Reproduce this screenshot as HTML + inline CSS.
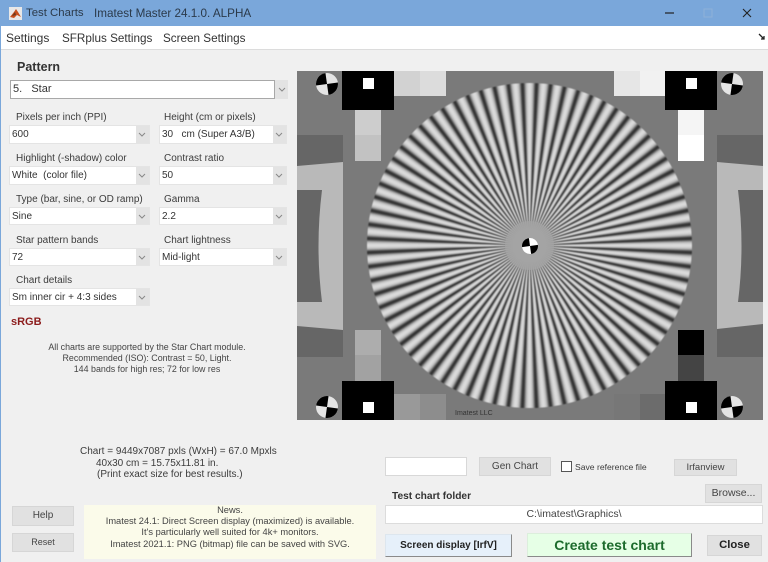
<!DOCTYPE html>
<html><head><meta charset="utf-8"><title>Test Charts</title>
<style>
html,body{margin:0;padding:0;background:#f0f0f0}
body{width:768px;height:562px;overflow:hidden;position:relative;font-family:"Liberation Sans",sans-serif;color:#333}
#p{position:absolute;left:0;top:0;width:768px;height:562px;overflow:hidden;background:#f0f0f0;filter:blur(.35px)}
.a,.t,.d,.b,.c{position:absolute;box-sizing:border-box;white-space:pre}
.t{font-size:10px;line-height:12px;color:#3c3c3c}
.l{margin-top:1px}
.c{font-size:8.9px;line-height:11px;text-align:center;color:#444}
.d{background:#fff;font-size:10px;line-height:18px;padding-left:2px;color:#333;border:1px solid #e4e4e4}
.d i{position:absolute;right:0;top:0;bottom:0;width:13px;background:#e3e3e3}
.d svg{position:absolute;right:3px;top:6px}
.b{background:#e1e1e1;border:1px solid #d6d6d6;text-align:center;font-size:10px;color:#444}
.m{font-size:11.7px;line-height:15px}
</style></head><body><div id="p">

<div class="a" style="left:0;top:0;width:768px;height:26px;background:#7aa7da"></div>
<div class="a" style="left:0;top:26px;width:1px;height:536px;background:#7aa7da"></div>
<svg class="a" style="left:9px;top:7px" width="13" height="13" viewBox="0 0 13 13"><rect width="13" height="13" fill="#e8e8e8"/><path d="M1 10 L5 5 L7 2 L9 5 L12 10 L8 8 L5 11 Z" fill="#c8501e"/><path d="M3 9 L6 5 L7 8Z" fill="#6a3a20"/></svg>
<div class="t m" style="left:26px;top:6px;color:#2b3a4a;font-size:11.4px">Test Charts</div>
<div class="t m" style="left:94px;top:6px;color:#2b3a4a">Imatest Master 24.1.0. ALPHA</div>
<svg class="a" style="left:660px;top:5px" width="108" height="18" viewBox="0 0 108 18">
<path d="M5 8H14" stroke="#222" stroke-width="1.2"/>
<rect x="44" y="4" width="8" height="8" fill="none" stroke="#8fb0d8"/>
<path d="M83 4L91 12M91 4L83 12" stroke="#222" stroke-width="1.1"/></svg>

<div class="a" style="left:1px;top:26px;width:767px;height:24px;background:#fff;border-bottom:1px solid #dcdcdc"></div>
<div class="t m" style="left:6px;top:31px;color:#333;font-size:12px">Settings</div>
<div class="t m" style="left:62px;top:31px;color:#333">SFRplus Settings</div>
<div class="t m" style="left:163px;top:31px;color:#333">Screen Settings</div>
<svg class="a" style="left:758px;top:33px" width="8" height="8" viewBox="0 0 8 8"><path d="M1 1L6 6M6 3V6H3" stroke="#222" stroke-width="1.3" fill="none"/></svg>

<div class="t" style="left:17px;top:60px;font-size:12.5px;line-height:14px;font-weight:bold;color:#333">Pattern</div>
<div class="d" style="left:10px;top:80px;width:265px;height:19px;border:1px solid #a8a8a8;font-size:11px;line-height:17px">5.   Star</div>
<div class="d" style="left:275px;top:80px;width:13px;height:19px;border:0;background:#e3e3e3"><svg style="right:2px;top:7px" width="8" height="5" viewBox="0 0 8 5"><path d="M1 1L4 4L7 1" stroke="#888" fill="none"/></svg></div>

<div class="t l" style="left:16px;top:111px">Pixels per inch (PPI)</div>
<div class="t l" style="left:164px;top:111px">Height (cm or pixels)</div>
<div class="d" style="left:9px;top:125px;width:141px;height:19px">600<i></i><svg width="8" height="5" viewBox="0 0 8 5"><path d="M1 1L4 4L7 1" stroke="#888" fill="none"/></svg></div>
<div class="d" style="left:159px;top:125px;width:128px;height:19px">30   cm (Super A3/B)<i></i><svg width="8" height="5" viewBox="0 0 8 5"><path d="M1 1L4 4L7 1" stroke="#888" fill="none"/></svg></div>

<div class="t l" style="left:16px;top:152px">Highlight (-shadow) color</div>
<div class="t l" style="left:164px;top:152px">Contrast ratio</div>
<div class="d" style="left:9px;top:166px;width:141px;height:19px">White  (color file)<i></i><svg width="8" height="5" viewBox="0 0 8 5"><path d="M1 1L4 4L7 1" stroke="#888" fill="none"/></svg></div>
<div class="d" style="left:159px;top:166px;width:128px;height:19px">50<i></i><svg width="8" height="5" viewBox="0 0 8 5"><path d="M1 1L4 4L7 1" stroke="#888" fill="none"/></svg></div>

<div class="t l" style="left:16px;top:193px">Type (bar, sine, or OD ramp)</div>
<div class="t l" style="left:164px;top:193px">Gamma</div>
<div class="d" style="left:9px;top:207px;width:141px;height:18px">Sine<i></i><svg width="8" height="5" viewBox="0 0 8 5"><path d="M1 1L4 4L7 1" stroke="#888" fill="none"/></svg></div>
<div class="d" style="left:159px;top:207px;width:128px;height:18px">2.2<i></i><svg width="8" height="5" viewBox="0 0 8 5"><path d="M1 1L4 4L7 1" stroke="#888" fill="none"/></svg></div>

<div class="t l" style="left:16px;top:234px">Star pattern bands</div>
<div class="t l" style="left:164px;top:234px">Chart lightness</div>
<div class="d" style="left:9px;top:248px;width:141px;height:18px">72<i></i><svg width="8" height="5" viewBox="0 0 8 5"><path d="M1 1L4 4L7 1" stroke="#888" fill="none"/></svg></div>
<div class="d" style="left:159px;top:248px;width:128px;height:18px">Mid-light<i></i><svg width="8" height="5" viewBox="0 0 8 5"><path d="M1 1L4 4L7 1" stroke="#888" fill="none"/></svg></div>

<div class="t l" style="left:16px;top:274px">Chart details</div>
<div class="d" style="left:9px;top:288px;width:141px;height:18px">Sm inner cir + 4:3 sides<i></i><svg width="8" height="5" viewBox="0 0 8 5"><path d="M1 1L4 4L7 1" stroke="#888" fill="none"/></svg></div>

<div class="t" style="left:11px;top:316px;font-size:11px;font-weight:bold;color:#8c1c1c">sRGB</div>
<div class="c" style="left:0;top:341px;width:294px;margin-top:1px">All charts are supported by the Star Chart module.
Recommended (ISO): Contrast = 50, Light.
144 bands for high res; 72 for low res</div>

<!-- chart -->
<svg class="a" style="left:297px;top:71px" width="466" height="349" viewBox="297 71 466 349">
<rect x="297" y="71" width="466" height="349" fill="#7a7a7a"/>
<rect x="297" y="135" width="46" height="222" fill="#666"/>
<rect x="717" y="135" width="46" height="222" fill="#666"/>
<path d="M297 166L343 162V330L297 326Z" fill="#b9b9b9"/>
<path d="M717 162L763 166V324L717 329Z" fill="#b9b9b9"/>
<path d="M297 190H322Q315 246 322 302H297Z" fill="#666"/>
<path d="M763 190H738Q745 246 738 302H763Z" fill="#666"/>
<rect x="342" y="71" width="52" height="39"/><rect x="665" y="71" width="52" height="39"/>
<rect x="342" y="381" width="52" height="39"/><rect x="665" y="381" width="52" height="39"/>
<g fill="#fff"><rect x="363" y="78" width="11" height="11"/><rect x="686" y="78" width="11" height="11"/><rect x="363" y="402" width="11" height="11"/><rect x="686" y="402" width="11" height="11"/></g>
<rect x="394" y="71" width="26" height="25" fill="#d2d2d2"/><rect x="420" y="71" width="26" height="25" fill="#dcdcdc"/>
<rect x="614" y="71" width="26" height="25" fill="#e6e6e6"/><rect x="640" y="71" width="25" height="25" fill="#f1f1f1"/>
<rect x="355" y="110" width="26" height="25" fill="#cdcdcd"/><rect x="355" y="135" width="26" height="26" fill="#c2c2c2"/>
<rect x="678" y="110" width="26" height="25" fill="#f5f5f5"/><rect x="678" y="135" width="26" height="26" fill="#fff"/>
<rect x="355" y="330" width="26" height="25" fill="#adadad"/><rect x="355" y="355" width="26" height="26" fill="#a2a2a2"/>
<rect x="678" y="330" width="26" height="25" fill="#000"/><rect x="678" y="355" width="26" height="26" fill="#444"/>
<rect x="394" y="394" width="26" height="26" fill="#999"/><rect x="420" y="394" width="26" height="26" fill="#8d8d8d"/>
<rect x="614" y="394" width="26" height="26" fill="#777"/><rect x="640" y="394" width="25" height="26" fill="#6c6c6c"/>
<g>
<circle cx="327" cy="84" r="11" fill="#e4e4e4"/><g transform="rotate(-8 327 84)"><path d="M327 84L316 84A11 11 0 0 1 327 73Z" fill="#000"/><path d="M327 84L338 84A11 11 0 0 1 327 95Z" fill="#000"/></g>
<circle cx="732" cy="84" r="11" fill="#e4e4e4"/><g transform="rotate(8 732 84)"><path d="M732 84L721 84A11 11 0 0 1 732 73Z" fill="#000"/><path d="M732 84L743 84A11 11 0 0 1 732 95Z" fill="#000"/></g>
<circle cx="327" cy="407" r="11" fill="#e4e4e4"/><g transform="rotate(8 327 407)"><path d="M327 407L316 407A11 11 0 0 1 327 396Z" fill="#000"/><path d="M327 407L338 407A11 11 0 0 1 327 418Z" fill="#000"/></g>
<circle cx="732" cy="407" r="11" fill="#e4e4e4"/><g transform="rotate(-8 732 407)"><path d="M732 407L721 407A11 11 0 0 1 732 396Z" fill="#000"/><path d="M732 407L743 407A11 11 0 0 1 732 418Z" fill="#000"/></g>
</g>
<text x="455" y="415" font-family="Liberation Sans" font-size="7" fill="#333">Imatest LLC</text>
</svg>
<div class="a" style="left:367px;top:83px;width:325px;height:325px;border-radius:50%;filter:blur(.4px);background:repeating-conic-gradient(from 0deg,#dcdcdc 0deg,#d6d6d6 .5deg,#b8b8b8 1.15deg,#808080 1.65deg,#404040 2.1deg,#2e2e2e 2.5deg,#404040 2.9deg,#808080 3.35deg,#b8b8b8 3.85deg,#d6d6d6 4.5deg,#dcdcdc 5deg)"></div>
<div class="a" style="left:505px;top:221px;width:49px;height:49px;border-radius:50%;background:radial-gradient(circle,#a4a4a4 0,#a4a4a4 45%,rgba(164,164,164,.7) 70%,rgba(164,164,164,0) 100%)"></div>
<svg class="a" style="left:519px;top:235px" width="22" height="22" viewBox="0 0 22 22"><g transform="rotate(-8 11 11)"><circle cx="11" cy="11" r="8" fill="#fff"/><path d="M11 11L3 11A8 8 0 0 1 11 3Z" fill="#000"/><path d="M11 11L19 11A8 8 0 0 1 11 19Z" fill="#000"/></g></svg>

<!-- bottom-left -->
<div class="t" style="left:80px;top:446px">Chart = 9449x7087 pxls (WxH) = 67.0 Mpxls</div>
<div class="t" style="left:96px;top:458px">40x30 cm = 15.75x11.81 in.</div>
<div class="t" style="left:97px;top:469px">(Print exact size for best results.)</div>

<div class="b" style="left:12px;top:506px;width:62px;height:20px;line-height:18px">Help</div>
<div class="b" style="left:12px;top:533px;width:62px;height:19px;line-height:17px;font-size:9px">Reset</div>
<div class="a" style="left:84px;top:505px;width:292px;height:54px;background:#fbfbea"></div>
<div class="c" style="left:84px;top:505px;width:292px;font-size:9.3px;line-height:11.2px;padding-top:0">News.
Imatest 24.1: Direct Screen display (maximized) is available.
It's particularly well suited for 4k+ monitors.
Imatest 2021.1: PNG (bitmap) file can be saved with SVG.</div>

<!-- bottom-right -->
<div class="a" style="left:385px;top:457px;width:82px;height:19px;background:#fff;border:1px solid #d8d8d8"></div>
<div class="b" style="left:479px;top:457px;width:72px;height:19px;line-height:17px">Gen Chart</div>
<div class="a" style="left:561px;top:461px;width:11px;height:11px;background:#fff;border:1px solid #555"></div>
<div class="t" style="left:575px;top:461px;font-size:8.6px">Save reference file</div>
<div class="b" style="left:674px;top:459px;width:63px;height:17px;line-height:16px;font-size:9.5px">Irfanview</div>
<div class="b" style="left:705px;top:484px;width:57px;height:19px;line-height:17px;font-size:10.5px">Browse...</div>
<div class="t" style="left:392px;top:491px;font-size:10.2px;font-weight:bold;color:#333">Test chart folder</div>
<div class="a" style="left:385px;top:505px;width:378px;height:19px;background:#fff;border:1px solid #dcdcdc;text-align:center;font-size:10.5px;line-height:17px;color:#444;white-space:pre">C:\imatest\Graphics\</div>
<div class="b" style="left:385px;top:534px;width:127px;height:23px;line-height:21px;background:#e6f0fa;border:1px solid #dde6ee;border-right:1px solid #8a8a8a;border-bottom:1px solid #8a8a8a;font-weight:bold;font-size:10px;color:#222">Screen display [IrfV]</div>
<div class="b" style="left:527px;top:533px;width:165px;height:24px;line-height:22px;background:#e6ffe6;border:1px solid #dceedc;border-right:1px solid #8a8a8a;border-bottom:1px solid #8a8a8a;font-weight:bold;font-size:14px;color:#1c6b2c">Create test chart</div>
<div class="b" style="left:707px;top:535px;width:55px;height:21px;line-height:19px;font-weight:bold;font-size:11.3px;color:#222">Close</div>

</div></body></html>
